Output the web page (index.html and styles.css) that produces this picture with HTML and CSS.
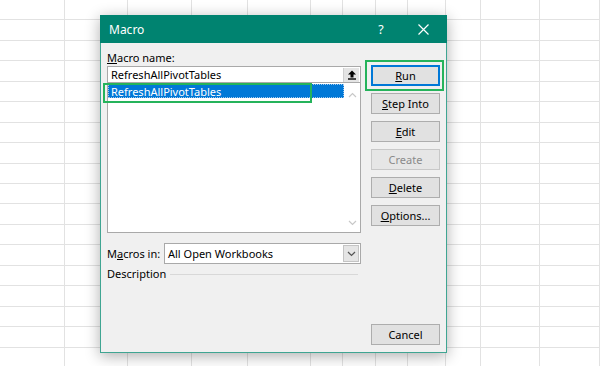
FILE: index.html
```html
<!DOCTYPE html>
<html>
<head>
<meta charset="utf-8">
<link rel="stylesheet" href="styles.css">
</head>
<body>
<div class="sheet">
  <div class="col" style="width:65px"></div>
  <div class="col" style="width:63px"></div>
  <div class="col" style="width:64px"></div>
  <div class="col" style="width:56px"></div>
  <div class="col" style="width:63px"></div>
  <div class="col" style="width:32px"></div>
  <div class="col" style="width:33px"></div>
  <div class="col" style="width:32px"></div>
  <div class="col" style="width:38px"></div>
  <div class="col" style="width:35px"></div>
  <div class="col" style="width:59px"></div>
  <div class="col" style="width:60px"></div>
</div>

<div class="dialog">
  <div class="titlebar">
    <span class="title">Macro</span>
    <span class="help">?</span>
    <span class="close">
      <svg width="11" height="11" viewBox="0 0 11 11"><path d="M0.5 0.5L10.5 10.5M10.5 0.5L0.5 10.5" stroke="#fff" stroke-width="1.2" fill="none"/></svg>
    </span>
  </div>
  <div class="body">
    <div class="left">
      <div class="label"><u>M</u>acro name:</div>
      <div class="namebox">
        <div class="nameinput">RefreshAllPivotTables</div>
        <div class="uploadbtn">
          <svg width="10" height="10" viewBox="0 0 10 10"><path d="M5 0.5L9 4.5H6.5V7.5H3.5V4.5H1Z" fill="#000"/><rect x="1" y="8.3" width="8" height="1.4" fill="#000"/></svg>
        </div>
      </div>
      <div class="list">
        <div class="items">
          <div class="item selected"><span class="focus">RefreshAllPivotTables</span></div>
          <div class="callout"></div>
        </div>
        <div class="vscroll">
          <svg width="9" height="6" viewBox="0 0 9 6"><path d="M1 5L4.5 1.5L8 5" stroke="#c8c8c8" stroke-width="1.2" fill="none"/></svg>
          <svg width="9" height="6" viewBox="0 0 9 6"><path d="M1 1L4.5 4.5L8 1" stroke="#c8c8c8" stroke-width="1.2" fill="none"/></svg>
        </div>
      </div>
      <div class="inrow">
        <span class="label">M<u>a</u>cros in:</span>
        <div class="select">
          <span class="selval">All Open Workbooks</span>
          <span class="selbtn">
            <svg width="9" height="6" viewBox="0 0 9 6"><path d="M1 1L4.5 4.5L8 1" stroke="#555" stroke-width="1.2" fill="none"/></svg>
          </span>
        </div>
      </div>
      <div class="descrow">
        <span class="label">Description</span>
        <span class="rule"></span>
      </div>
    </div>
    <div class="right">
      <button class="btn run"><u>R</u>un</button>
      <button class="btn"><u>S</u>tep Into</button>
      <button class="btn"><u>E</u>dit</button>
      <button class="btn disabled">Create</button>
      <button class="btn"><u>D</u>elete</button>
      <button class="btn"><u>O</u>ptions...</button>
      <button class="btn cancel">Cancel</button>
    </div>
  </div>
</div>
</body>
</html>
```

FILE: styles.css
```css
* { box-sizing: border-box; }
html, body { margin: 0; padding: 0; }
body {
  width: 600px;
  height: 366px;
  overflow: hidden;
  background: #fff;
  position: relative;
  font-family: "Noto Sans", "Open Sans", sans-serif;
}
.sheet {
  display: flex;
  height: 366px;
  background-image: repeating-linear-gradient(to bottom, transparent 0, transparent 19.45px, #e2e2e2 19.45px, #e2e2e2 20.45px);
}
.col {
  flex: none;
  height: 100%;
  border-right: 1px solid #e2e2e2;
}
.dialog {
  position: absolute;
  left: 100px;
  top: 15px;
  width: 347px;
  height: 338px;
  background: #f0f0f0;
  border: 1px solid #3fa592;
  box-shadow: 0 3px 14px rgba(0, 0, 0, 0.32);
  display: flex;
  flex-direction: column;
}
.titlebar {
  height: 28px;
  margin: -1px -1px 0 -1px;
  background: #008370;
  color: #fff;
  display: flex;
  align-items: center;
  font-size: 12px;
}
.title { padding-left: 9px; flex: 1; }
.help { width: 14px; text-align: center; margin-right: 30px; font-size: 12.5px; }
.close { width: 12px; margin-right: 17px; display: flex; align-items: center; }
.body {
  flex: 1;
  display: flex;
  padding: 7px 6px 7px 6px;
  font-size: 11px;
  color: #000;
}
.left {
  width: 254px;
  display: flex;
  flex-direction: column;
}
.label { line-height: 16px; height: 16px; white-space: nowrap; }
u { text-decoration: underline; text-underline-offset: 1px; }
.namebox {
  display: flex;
  height: 16px;
  background: #fff;
  border: 1px solid #a9a9a9;
  border-bottom: none;
}
.nameinput { flex: 1; line-height: 15px; padding-left: 3px; }
.uploadbtn {
  width: 16px;
  margin: 1px 1px 0 0;
  background: #e4e4e4;
  border-left: 1px solid #cfcfcf;
  display: flex;
  align-items: center;
  justify-content: center;
}
.list {
  height: 151px;
  background: #fff;
  border: 1px solid #a9a9a9;
  display: flex;
}
.items {
  flex: 1;
  position: relative;
  padding: 1px 0 0 0;
}
.item {
  height: 14px;
  line-height: 13px;
}
.selected {
  background: #0078d7;
  color: #fff;
}
.focus {
  display: block;
  height: 14px;
  border: 1px dotted #9fc8ee;
  padding-left: 2px;
  width: 100%;
}
.callout {
  position: absolute;
  left: -5px;
  top: 0px;
  width: 209px;
  height: 20px;
  border: 2px solid #25b35b;
}
.vscroll {
  width: 16px;
  display: flex;
  flex-direction: column;
  justify-content: space-between;
  align-items: center;
  padding: 9px 0 6px 0;
}
.inrow {
  margin-top: 10px;
  display: flex;
  align-items: center;
  height: 21px;
}
.inrow .label { width: 57px; }
.select {
  flex: 1;
  height: 21px;
  display: flex;
  background: #fff;
  border: 1px solid #a9a9a9;
}
.selval { flex: 1; line-height: 19px; padding-left: 3px; }
.selbtn {
  width: 16px;
  margin: 1px;
  background: #e5e5e5;
  border: 1px solid #c4c4c4;
  display: flex;
  align-items: center;
  justify-content: center;
}
.descrow {
  margin-top: 2px;
  display: flex;
  align-items: center;
  height: 16px;
}
.rule {
  flex: 1;
  height: 1px;
  background: #d8d8d8;
  margin: 0 3px 0 4px;
}
.right {
  margin-left: 10px;
  padding-top: 15px;
  display: flex;
  flex-direction: column;
  gap: 7px;
  width: 69px;
}
.btn {
  height: 21px;
  width: 69px;
  background: #e1e1e1;
  border: 1px solid #adadad;
  font-family: inherit;
  font-size: 11px;
  color: #000;
  padding: 0;
  line-height: 17px;
  position: relative;
}
.run {
  border: 2px solid #0078d7;
}
.run::after {
  content: "";
  position: absolute;
  left: -8px;
  top: -7px;
  right: -6px;
  bottom: -7px;
  border: 2px solid #25b35b;
}
.disabled { color: #8a8a8a; border-color: #c8c8c8; background: #e6e6e6; }
.cancel { margin-top: auto; }
```
